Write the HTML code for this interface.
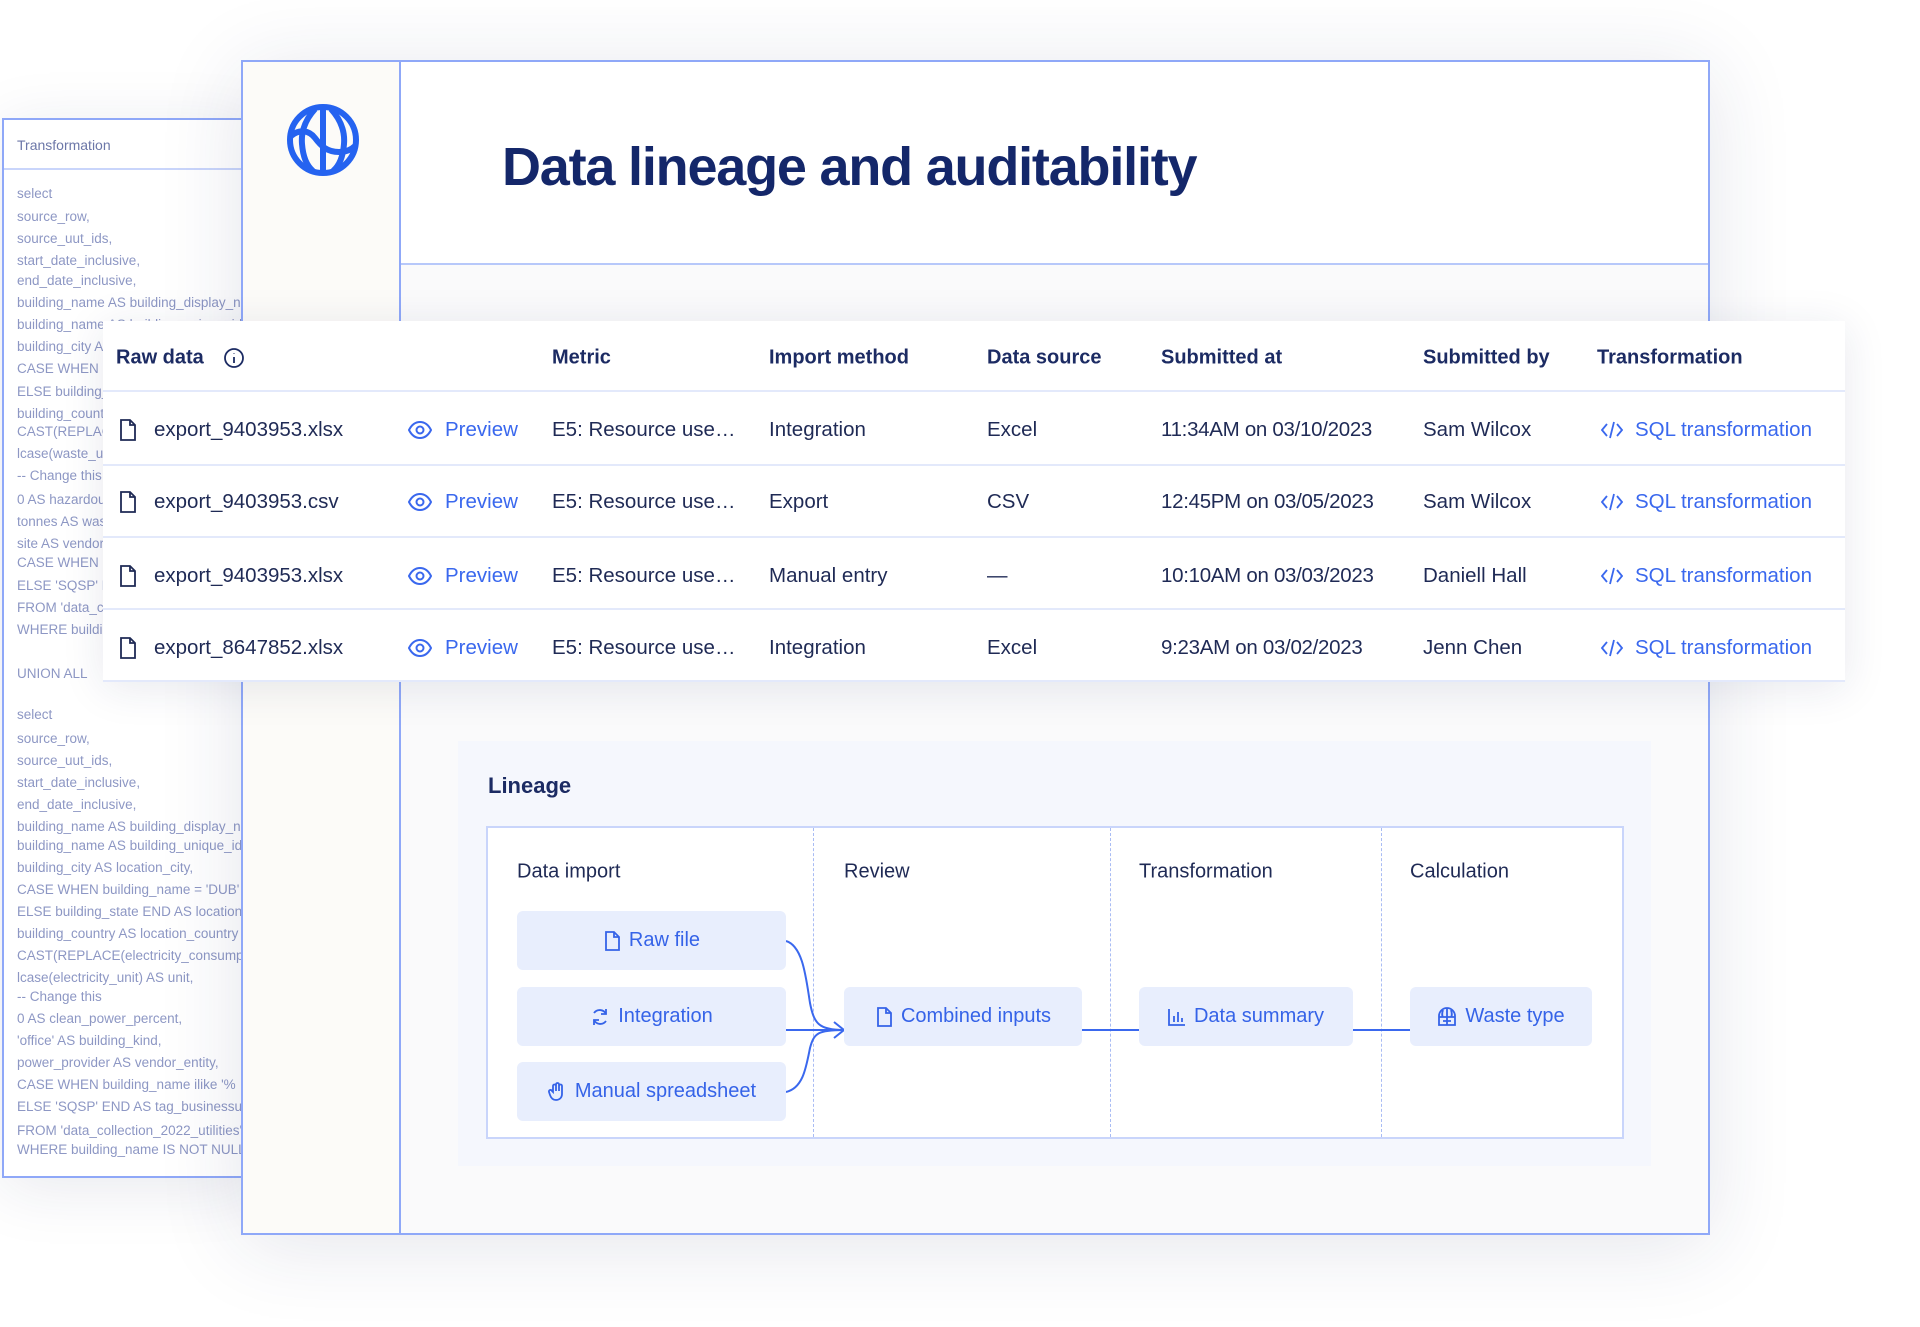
<!DOCTYPE html>
<html><head><meta charset="utf-8"><style>
*{margin:0;padding:0;box-sizing:border-box}
body{width:1920px;height:1327px;background:#fff;position:relative;overflow:hidden;font-family:"Liberation Sans",sans-serif;color:#1f2a55}
.abs{position:absolute}
#code{left:2px;top:118px;width:250px;height:1060px;background:#fff;border:2px solid #8fa8f8;border-right:none;box-shadow:0 10px 60px rgba(30,40,90,.10);overflow:hidden}
#code .hd{position:absolute;left:0;top:0;width:100%;height:50px;border-bottom:2px solid #c9d5fb}
#code .hd span{position:absolute;left:13px;top:17px;font-size:14px;color:#6c77a8}
.cl{position:absolute;left:13px;font-size:13.5px;color:#8d97c4;white-space:nowrap;line-height:16px}
#main{left:241px;top:60px;width:1469px;height:1175px;background:#fafafb;border:2px solid #8fa8f8;box-shadow:0 10px 80px rgba(30,40,90,.12)}
#side{left:0;top:0;width:158px;height:100%;background:#fcfbf8;border-right:2px solid #8fa8f8}
#head{left:158px;top:0;right:0;height:203px;background:#fff;border-bottom:2px solid #b7c8fa}
#title{left:502px;top:136px;font-size:54px;font-weight:bold;color:#14276a;letter-spacing:-1.2px;white-space:nowrap}
#table{left:103px;top:321px;width:1742px;height:361px;background:#fff;box-shadow:0 6px 40px rgba(30,40,90,.10);z-index:5}
.row{position:absolute;left:0;width:100%;border-bottom:2px solid #e3e9fb}
.t{position:absolute;font-size:20.5px;white-space:nowrap;transform:translateY(-50%)}
.h{font-weight:bold;color:#1c2b63;font-size:20px}
.lk{color:#3a68ee}
#lin{left:458px;top:741px;width:1193px;height:425px;background:#f5f7fd;z-index:2}
#box{left:486px;top:826px;width:1138px;height:313px;background:#fff;border:2px solid #c9d5fb;z-index:3}
.dv{position:absolute;top:0;height:100%;border-left:1.5px dashed #a9bcf4}
.nd{position:absolute;background:#e8eefd;border-radius:6px;color:#3563e8;font-size:20px;display:flex;align-items:center;justify-content:center;gap:8px;z-index:4}
.ct{position:absolute;font-size:20px;color:#1f2a55;transform:translateY(-50%)}
</style></head><body>

<div id="code" class="abs">
<div class="hd"><span>Transformation</span></div>
<div class="cl" style="top:66px">select</div>
<div class="cl" style="top:89px">source_row,</div>
<div class="cl" style="top:111px">source_uut_ids,</div>
<div class="cl" style="top:133px">start_date_inclusive,</div>
<div class="cl" style="top:153px">end_date_inclusive,</div>
<div class="cl" style="top:175px">building_name AS building_display_name,</div>
<div class="cl" style="top:197px">building_name AS building_unique_id,</div>
<div class="cl" style="top:219px">building_city AS location_city,</div>
<div class="cl" style="top:241px">CASE WHEN building_name = 'DUB'</div>
<div class="cl" style="top:264px">ELSE building_state END AS location</div>
<div class="cl" style="top:286px">building_country AS location_country,</div>
<div class="cl" style="top:304px">CAST(REPLACE(waste_amount</div>
<div class="cl" style="top:326px">lcase(waste_unit) AS unit,</div>
<div class="cl" style="top:348px">-- Change this</div>
<div class="cl" style="top:372px">0 AS hazardous_percent,</div>
<div class="cl" style="top:394px">tonnes AS waste_unit,</div>
<div class="cl" style="top:416px">site AS vendor_entity,</div>
<div class="cl" style="top:435px">CASE WHEN building_name</div>
<div class="cl" style="top:458px">ELSE 'SQSP' END AS tag</div>
<div class="cl" style="top:480px">FROM 'data_collection</div>
<div class="cl" style="top:502px">WHERE building_name</div>
<div class="cl" style="top:546px">UNION ALL</div>
<div class="cl" style="top:587px">select</div>
<div class="cl" style="top:611px">source_row,</div>
<div class="cl" style="top:633px">source_uut_ids,</div>
<div class="cl" style="top:655px">start_date_inclusive,</div>
<div class="cl" style="top:677px">end_date_inclusive,</div>
<div class="cl" style="top:699px">building_name AS building_display_name,</div>
<div class="cl" style="top:718px">building_name AS building_unique_id,</div>
<div class="cl" style="top:740px">building_city AS location_city,</div>
<div class="cl" style="top:762px">CASE WHEN building_name = 'DUB'</div>
<div class="cl" style="top:784px">ELSE building_state END AS location</div>
<div class="cl" style="top:806px">building_country AS location_country</div>
<div class="cl" style="top:828px">CAST(REPLACE(electricity_consumption</div>
<div class="cl" style="top:850px">lcase(electricity_unit) AS unit,</div>
<div class="cl" style="top:869px">-- Change this</div>
<div class="cl" style="top:891px">0 AS clean_power_percent,</div>
<div class="cl" style="top:913px">'office' AS building_kind,</div>
<div class="cl" style="top:935px">power_provider AS vendor_entity,</div>
<div class="cl" style="top:957px">CASE WHEN building_name ilike '%</div>
<div class="cl" style="top:979px">ELSE 'SQSP' END AS tag_businessunit</div>
<div class="cl" style="top:1003px">FROM 'data_collection_2022_utilities'</div>
<div class="cl" style="top:1022px">WHERE building_name IS NOT NULL</div>
</div>

<div id="main" class="abs">
<div id="side" class="abs">
<svg class="abs" style="left:42px;top:40px" width="76" height="76" viewBox="0 0 76 76" fill="none" stroke="#2563f0" stroke-width="6">
<circle cx="38" cy="38" r="33"/>
<path d="M38 5V71"/>
<path d="M30 7C20 18 16 30 17 42C18 55 22 64 28 69"/>
<path d="M46 7C56 18 60 30 59 42C58 55 54 64 48 69"/>
<path d="M6 34C14 27 24 28 30 36C36 44 42 50 54 50C62 50 67 47 70 44"/>
</svg>
</div>
<div id="head" class="abs"></div>
</div>
<div id="title" class="abs" style="z-index:2">Data lineage and auditability</div>

<div id="table" class="abs">
<div class="row" style="top:0;height:71px"></div>
<div class="row" style="top:71px;height:74px"></div>
<div class="row" style="top:145px;height:72px"></div>
<div class="row" style="top:217px;height:72px"></div>
<div class="row" style="top:289px;height:72px"></div>
<div class="t h" style="left:13px;top:37px">Raw data</div>
<svg class="abs" style="left:120px;top:26px" width="22" height="22" viewBox="0 0 22 22" fill="none" stroke="#1c2b63" stroke-width="1.8"><circle cx="11" cy="11" r="9"/><path d="M11 10v6M11 6.5v.5"/></svg>
<div class="t h" style="left:449px;top:37px">Metric</div>
<div class="t h" style="left:666px;top:37px">Import method</div>
<div class="t h" style="left:884px;top:37px">Data source</div>
<div class="t h" style="left:1058px;top:37px">Submitted at</div>
<div class="t h" style="left:1320px;top:37px">Submitted by</div>
<div class="t h" style="left:1494px;top:37px">Transformation</div>
<div id="rows"></div>
</div>

<div id="lin" class="abs"><div class="abs" style="left:30px;top:32px;font-size:22px;font-weight:bold;color:#1c2b63">Lineage</div></div>
<div id="box" class="abs">
<div class="dv" style="left:325px"></div>
<div class="dv" style="left:622px"></div>
<div class="dv" style="left:893px"></div>
<div class="ct" style="left:29px;top:44px">Data import</div>
<div class="ct" style="left:356px;top:44px">Review</div>
<div class="ct" style="left:651px;top:44px">Transformation</div>
<div class="ct" style="left:922px;top:44px">Calculation</div>
<svg class="abs" style="left:0;top:0;z-index:3" width="1138" height="313" fill="none" stroke="#3a68ee" stroke-width="2">
<path d="M298 113C315 118 318 150 322 175C326 195 330 202 356 202"/>
<path d="M298 202H356"/>
<path d="M298 264C315 260 318 240 322 220C326 205 330 202 356 202"/>
<path d="M346 194L356 202L346 210"/>
<path d="M594 202H652"/><path d="M865 202H923"/>
</svg>
<div class="nd" style="left:29px;top:83px;width:269px;height:59px"><svg width="18" height="20" viewBox="0 0 18 20" fill="none" stroke="#3563e8" stroke-width="1.8"><path d="M3 1h8l5 5v13H3z"/><path d="M11 1v5h5"/></svg>Raw file</div>
<div class="nd" style="left:29px;top:159px;width:269px;height:59px"><svg width="20" height="20" viewBox="0 0 20 20" fill="none" stroke="#3563e8" stroke-width="1.8"><path d="M16 7A7 7 0 0 0 4 6M4 13a7 7 0 0 0 12 1"/><path d="M16 2v5h-5M4 18v-5h5"/></svg>Integration</div>
<div class="nd" style="left:29px;top:234px;width:269px;height:59px"><svg width="20" height="20" viewBox="0 0 20 20" fill="none" stroke="#3563e8" stroke-width="1.8"><path d="M6 10V4a1.5 1.5 0 0 1 3 0v5V2.5a1.5 1.5 0 0 1 3 0V9V4a1.5 1.5 0 0 1 3 0v8c0 4-3 6-6 6s-5-2-6-5l-1-3a1.5 1.5 0 0 1 3-1z"/></svg>Manual spreadsheet</div>
<div class="nd" style="left:356px;top:159px;width:238px;height:59px"><svg width="18" height="20" viewBox="0 0 18 20" fill="none" stroke="#3563e8" stroke-width="1.8"><path d="M3 1h8l5 5v13H3z"/><path d="M11 1v5h5"/></svg>Combined inputs</div>
<div class="nd" style="left:651px;top:159px;width:214px;height:59px"><svg width="18" height="18" viewBox="0 0 18 18" fill="none" stroke="#3563e8" stroke-width="1.8"><path d="M1 1v16h16M6 14V8M10 14V4M14 14v-4"/></svg>Data summary</div>
<div class="nd" style="left:922px;top:159px;width:182px;height:59px"><svg width="20" height="20" viewBox="0 0 20 20" fill="none" stroke="#3563e8" stroke-width="1.8"><path d="M2 18V9a8 8 0 0 1 16 0v9z"/><path d="M2 10h16M10 1v17M6 3c-1 3-1 6 0 7M14 3c1 3 1 6 0 7M6 14h8"/></svg>Waste type</div>
</div>

<script>
var rows=[["export_9403953.xlsx","Integration","Excel","11:34AM on 03/10/2023","Sam Wilcox"],
["export_9403953.csv","Export","CSV","12:45PM on 03/05/2023","Sam Wilcox"],
["export_9403953.xlsx","Manual entry","—","10:10AM on 03/03/2023","Daniell Hall"],
["export_8647852.xlsx","Integration","Excel","9:23AM on 03/02/2023","Jenn Chen"]];
var ys=[109,181,255,327],h="";
rows.forEach(function(r,i){var y=ys[i];
h+='<svg class="abs" style="left:16px;top:'+(y-11)+'px" width="18" height="22" viewBox="0 0 18 22" fill="none" stroke="#1f2a55" stroke-width="1.8"><path d="M2 1h9l5 5v15H2z"/><path d="M11 1v5h5"/></svg>';
h+='<div class="t" style="left:51px;top:'+y+'px">'+r[0]+'</div>';
h+='<svg class="abs" style="left:305px;top:'+(y-9)+'px" width="24" height="18" viewBox="0 0 24 18" fill="none" stroke="#3a68ee" stroke-width="2"><path d="M1 9C4 3 8 1 12 1s8 2 11 8c-3 6-7 8-11 8S4 15 1 9z"/><circle cx="12" cy="9" r="3.5"/></svg>';
h+='<div class="t lk" style="left:342px;top:'+y+'px">Preview</div>';
h+='<div class="t" style="left:449px;top:'+y+'px">E5: Resource use…</div>';
h+='<div class="t" style="left:666px;top:'+y+'px">'+r[1]+'</div>';
h+='<div class="t" style="left:884px;top:'+y+'px">'+r[2]+'</div>';
h+='<div class="t" style="left:1058px;top:'+y+'px;letter-spacing:-0.3px">'+r[3]+'</div>';
h+='<div class="t" style="left:1320px;top:'+y+'px">'+r[4]+'</div>';
h+='<svg class="abs" style="left:1498px;top:'+(y-10)+'px" width="22" height="20" viewBox="0 0 22 20" fill="none" stroke="#3a68ee" stroke-width="1.8"><path d="M6 4L1 10l5 6M16 4l5 6-5 6M13 2L9 18"/></svg>';
h+='<div class="t lk" style="left:1532px;top:'+y+'px">SQL transformation</div>';});
document.getElementById('rows').outerHTML=h;
</script>
</body></html>
